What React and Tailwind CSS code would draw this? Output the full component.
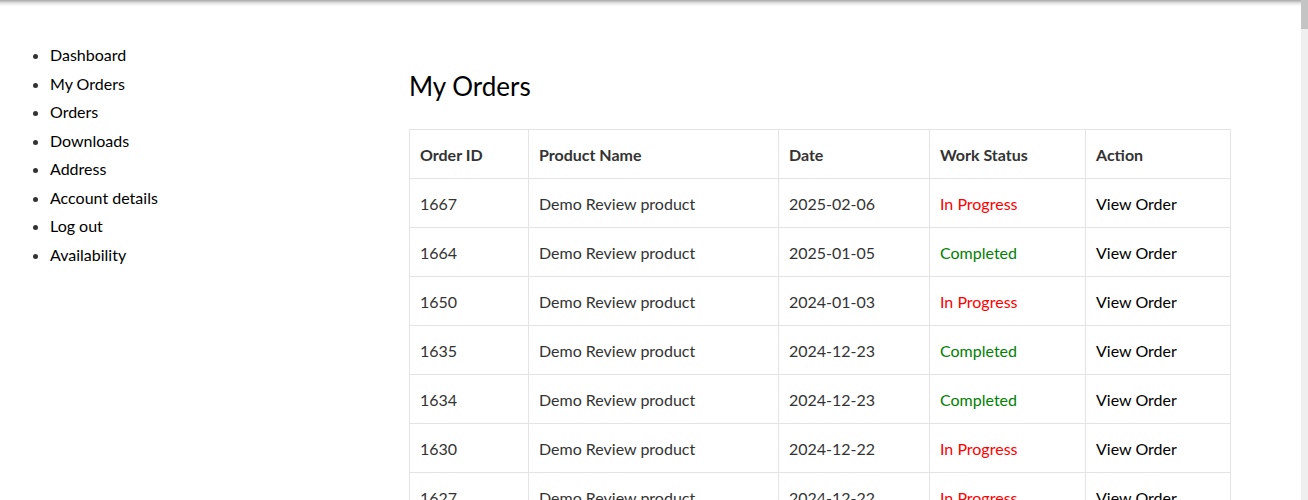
import React from 'react'

const menu = [
  'Dashboard',
  'My Orders',
  'Orders',
  'Downloads',
  'Address',
  'Account details',
  'Log out',
  'Availability',
]

const orders = [
  { id: '1667', date: '2025-02-06', done: false },
  { id: '1664', date: '2025-01-05', done: true },
  { id: '1650', date: '2024-01-03', done: false },
  { id: '1635', date: '2024-12-23', done: true },
  { id: '1634', date: '2024-12-23', done: true },
  { id: '1630', date: '2024-12-22', done: false },
  { id: '1627', date: '2024-12-22', done: false },
  { id: '1626', date: '2024-12-21', done: true },
]

const cell = 'border border-[#e4e4e4] px-[10px] pt-[13px] pb-[11px] leading-6'

const App = () => {
  return (
    <div className="flex h-[500px] w-[1308px] overflow-hidden bg-white font-['Lato','Liberation_Sans',sans-serif] text-[16px]">
      <div className="flex flex-1 flex-col">
        {/* top shadow */}
        <div className="h-[6px] shrink-0 bg-gradient-to-b from-[#a8a8a8] via-[#e2e2e2] to-white" />

        <div className="flex shrink-0 items-start">
          {/* Account navigation */}
          <div className="w-[409px] pt-[35px]">
            <ul className="list-disc pl-[50px] text-black leading-[28.57px] marker:text-[#333]">
              {menu.map((item) => (
                <li key={item}>{item}</li>
              ))}
            </ul>
          </div>

          {/* Orders */}
          <div className="w-[822px] pt-[63px]">
            <h2 className="text-[26px] leading-[34px] text-black mb-[26px]">My Orders</h2>
            <table className="w-full border-collapse border border-[#e4e4e4] text-left">
              <thead>
                <tr className="text-[#333] font-bold">
                  <th className={`w-[119px] ${cell}`}>Order ID</th>
                  <th className={`w-[250px] ${cell}`}>Product Name</th>
                  <th className={`w-[151px] ${cell}`}>Date</th>
                  <th className={`w-[156px] ${cell}`}>Work Status</th>
                  <th className={cell}>Action</th>
                </tr>
              </thead>
              <tbody>
                {orders.map((o) => (
                  <tr key={o.id} className="text-[#333]">
                    <td className={cell}>{o.id}</td>
                    <td className={cell}>Demo Review product</td>
                    <td className={cell}>{o.date}</td>
                    <td className={`${cell} ${o.done ? 'text-[#008000]' : 'text-[#ff0000]'}`}>
                      {o.done ? 'Completed' : 'In Progress'}
                    </td>
                    <td className={`${cell} text-black`}>View Order</td>
                  </tr>
                ))}
              </tbody>
            </table>
          </div>
        </div>
      </div>

      {/* scrollbar */}
      <div className="w-[7px] bg-[#efefef]">
        <div className="h-[29px] bg-[#c4c4c4]" />
      </div>
    </div>
  )
}

export default App
